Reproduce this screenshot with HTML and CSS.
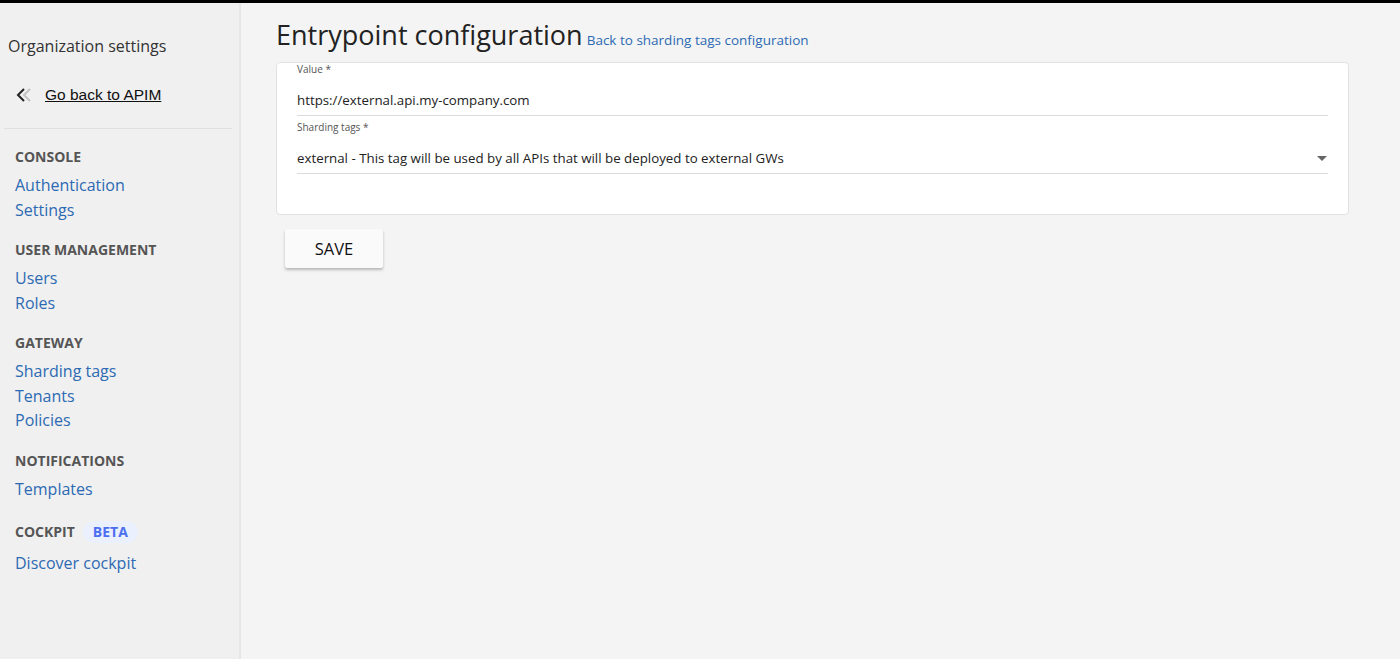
FILE: index.html
```html
<!DOCTYPE html>
<html lang="en">
  <head>
    <meta charset="UTF-8" />
    <meta name="viewport" content="width=device-width, initial-scale=1.0" />
    <title>Entrypoint configuration</title>
    <link rel="stylesheet" href="styles.css">
  </head>
  <body>
    <div class="topbar"></div>
    <div class="layout">
      <aside class="sidebar">
        <div class="org-title">Organization settings</div>
        <a class="back-link" href="#">
          <svg class="back-icon" width="18" height="18" viewBox="0 0 18 18">
            <path d="M9 3 L3 9 L9 15" fill="none" stroke="#222" stroke-width="2" />
            <path d="M15 3 L9 9 L15 15" fill="none" stroke="#c4c4c4" stroke-width="2" />
          </svg>
          <span>Go back to APIM</span>
        </a>
        <hr class="divider" />

        <div class="nav-group">
          <div class="nav-title">CONSOLE</div>
          <a class="nav-link" href="#">Authentication</a>
          <a class="nav-link" href="#">Settings</a>
        </div>
        <div class="nav-group">
          <div class="nav-title">USER MANAGEMENT</div>
          <a class="nav-link" href="#">Users</a>
          <a class="nav-link" href="#">Roles</a>
        </div>
        <div class="nav-group">
          <div class="nav-title">GATEWAY</div>
          <a class="nav-link" href="#">Sharding tags</a>
          <a class="nav-link" href="#">Tenants</a>
          <a class="nav-link" href="#">Policies</a>
        </div>
        <div class="nav-group">
          <div class="nav-title">NOTIFICATIONS</div>
          <a class="nav-link" href="#">Templates</a>
        </div>
        <div class="nav-group cockpit">
          <div class="nav-title">COCKPIT <span class="badge">BETA</span></div>
          <a class="nav-link" href="#">Discover cockpit</a>
        </div>
      </aside>

      <main class="content">
        <div class="page-head">
          <h1>Entrypoint configuration</h1>
          <a class="head-link" href="#">Back to sharding tags configuration</a>
        </div>

        <div class="card">
          <div class="field">
            <label>Value *</label>
            <div class="field-value">https://external.api.my-company.com</div>
          </div>
          <div class="field">
            <label>Sharding tags *</label>
            <div class="field-value select">
              <span>external - This tag will be used by all APIs that will be deployed to external GWs</span>
              <span class="caret"></span>
            </div>
          </div>
        </div>

        <button class="save-btn">SAVE</button>
      </main>
    </div>
  </body>
</html>
```

FILE: styles.css
```css
body {
  margin: 0;
  padding: 0;
  font-family: "Open Sans", "Liberation Sans", sans-serif;
  background: #f4f4f4;
  color: #222;
  height: 659px;
  overflow: hidden;
}

.topbar {
  height: 3px;
  background: #000;
}

.layout {
  display: flex;
  height: 656px;
}

.sidebar {
  width: 239px;
  background: #f0f0f0;
  border-right: 2px solid #e6e6e6;
  flex-shrink: 0;
}

.org-title {
  font-size: 16px;
  color: #333;
  padding: 32px 0 0 8px;
  height: 23px;
}

.back-link {
  display: flex;
  align-items: center;
  gap: 12px;
  margin: 28px 0 0 15px;
  color: #111;
  font-family: "Liberation Sans", Arial, sans-serif;
  font-size: 15.5px;
  text-decoration: none;
}

.back-link span {
  text-decoration: underline;
}

.back-icon {
  display: block;
}

.divider {
  border: none;
  border-top: 1px solid #e0e0e0;
  margin: 24px 7px 0 4px;
}

.nav-group {
  padding: 0 0 0 15px;
  margin-top: 18px;
  display: flex;
  flex-direction: column;
}

.nav-group:first-of-type {
  margin-top: 19px;
}

.nav-title {
  font-size: 14px;
  font-weight: bold;
  color: #555;
  height: 20px;
  line-height: 20px;
  margin-bottom: 6px;
  display: flex;
  align-items: center;
  gap: 8px;
}

.cockpit {
  margin-top: 20px;
}

.cockpit .nav-title {
  height: 22px;
  margin-bottom: 8px;
}

.badge {
  background: #eaf0fd;
  color: #4c6ef0;
  font-size: 14px;
  padding: 0 10px;
  border-radius: 11px;
  line-height: 22px;
  height: 22px;
}

.nav-link {
  font-size: 16px;
  color: #2d6ab3;
  text-decoration: none;
  line-height: 24.5px;
}

.content {
  flex: 1;
  padding: 0 51px 0 35px;
}

.page-head {
  display: flex;
  align-items: baseline;
  gap: 4px;
  height: 59px;
}

.page-head h1 {
  font-size: 27px;
  font-weight: normal;
  color: #222;
  margin: 13px 0 0 0;
}

.head-link {
  font-size: 13.5px;
  color: #2d6ab3;
  text-decoration: none;
}

.card {
  background: #fff;
  border: 1px solid #e2e2e2;
  border-radius: 4px;
  padding: 0 20px 40px 20px;
}

.field label {
  display: block;
  font-size: 10px;
  color: #555;
  line-height: 12px;
  height: 12px;
}

.field + .field label {
  margin-top: 5px;
}

.field-value {
  font-size: 13.3px;
  color: #222;
  line-height: 24px;
  padding: 13px 0 3px 0;
  border-bottom: 1px solid #dcdcdc;
}

.select {
  padding-top: 13px;
  display: flex;
  justify-content: space-between;
  align-items: center;
}

.caret {
  width: 0;
  height: 0;
  border-left: 5px solid transparent;
  border-right: 5px solid transparent;
  border-top: 5px solid #666;
  margin-right: 1px;
}

.save-btn {
  margin: 14px 0 0 9px;
  width: 98px;
  height: 39px;
  background: #fafafa;
  border: none;
  border-radius: 2px;
  box-shadow: 0 2px 3px rgba(0, 0, 0, 0.25);
  font-family: "Open Sans", sans-serif;
  font-size: 16.5px;
  color: #111;
}
```
